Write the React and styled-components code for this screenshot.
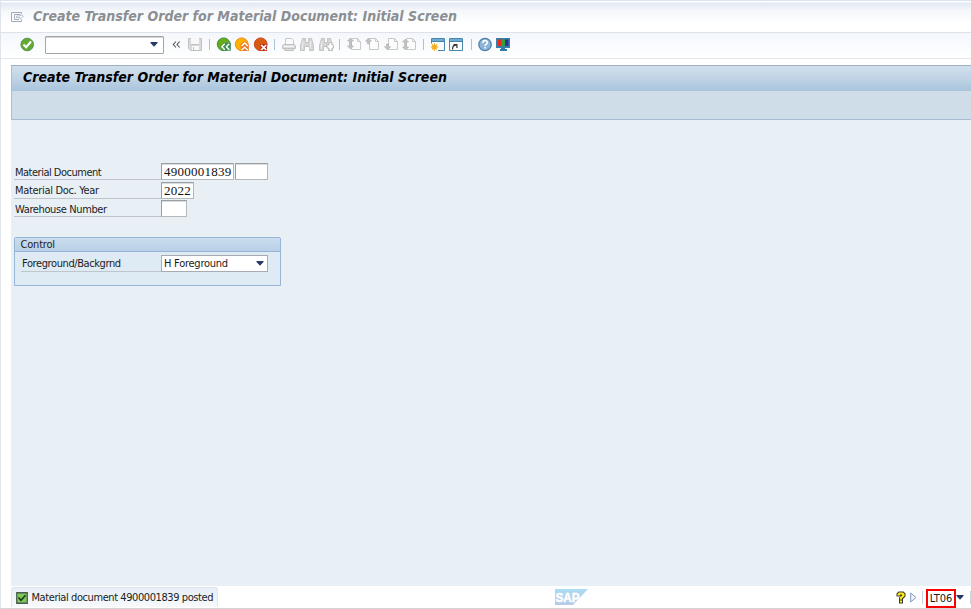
import React from 'react';
import styled, { createGlobalStyle } from 'styled-components';

const Global = createGlobalStyle`
  * { box-sizing: border-box; }
  body { margin: 0; overflow: hidden; background: #fff; }
  svg { flex: none; }
`;

const ui = `"DejaVu Sans Condensed", "DejaVu Sans", Tahoma, sans-serif`;

const Window = styled.div`
  width: 971px;
  height: 609px;
  display: flex;
  flex-direction: column;
  background: #fff;
  border-left: 1px solid #dfe3ea;
  border-bottom: 1px solid #d6d6d6;
  font-family: ${ui};
  font-stretch: condensed;
  font-size: 11px;
  color: #1c1c1c;
`;

const TitleBar = styled.header`
  height: 33px;
  flex: none;
  display: flex;
  align-items: center;
  padding: 0 0 0 10px;
  gap: 9px;
  border-top: 1px solid #dce3ec;
  border-bottom: 1px solid #dfe3e9;
  background: linear-gradient(#fff 0, #fff 1px, #e2e9f3 2px, #f5f8fb 10px, #fff 22px);
`;

const Title = styled.h1`
  margin: 0;
  padding-bottom: 2px;
  font-family: ${ui};
  font-size: 14px;
  line-height: 16px;
  font-weight: bold;
  font-style: italic;
  font-stretch: condensed;
  letter-spacing: 0.01px;
  white-space: nowrap;
  color: ${(p) => (p.$muted ? '#8b8e93' : '#000')};
`;

const Toolbar = styled.nav`
  height: 26px;
  flex: none;
  display: flex;
  align-items: center;
  padding: 0 0 3px 18px;
  border-bottom: 1px solid #e3e8ef;
  background: linear-gradient(#f4f7fc, #fff);
`;

const Slot = styled.span`
  width: 16px;
  height: 16px;
  flex: none;
  margin-left: ${(p) => p.$gap || 0}px;
  svg { display: block; }
`;

const Separator = styled.span`
  width: 1px;
  height: 11px;
  flex: none;
  margin-left: ${(p) => p.$gap}px;
  background: #a9c3dc;
`;

const CommandBox = styled.div`
  width: 119px;
  height: 18px;
  margin: 1px 0 0 10px;
  padding-right: 5px;
  display: flex;
  align-items: center;
  justify-content: flex-end;
  background: #fff;
  border: 1px solid #a5a5a5;
  border-radius: 1px;
  box-shadow: inset 0 1px #d5d5d5;
`;

const Main = styled.main`
  flex: 1;
  margin: 6px 0 0 10px;
  background: #e8f0f6;
`;

const Heading = styled.div`
  height: 26px;
  display: flex;
  align-items: center;
  padding: 0 0 2px 11px;
  border-top: 1px solid #9fb0c4;
  border-left: 1px solid #aebfd0;
  background: linear-gradient(#d0dfec, #c2d5e6 45%, #a9c4dc);
`;

const ActionBar = styled.div`
  height: 29px;
  border-left: 1px solid #aebfd0;
  border-bottom: 1px solid #a8bccf;
  background: #cfdde8;
`;

const Form = styled.div`
  padding: 43px 0 0 3px;
  display: flex;
  flex-direction: column;
  gap: 1px;
`;

const Row = styled.div`
  height: 17.5px;
  display: flex;
  gap: 1px;
`;

const Label = styled.label`
  width: ${(p) => p.$width || 147}px;
  height: 17px;
  padding: 1.5px 0 0 1px;
  border-bottom: 1px solid #bfc5ca;
  line-height: 15px;
  letter-spacing: ${(p) => p.$spacing}px;
  white-space: nowrap;
`;

const Field = styled.div`
  width: ${(p) => p.$width}px;
  height: 17px;
  margin-left: ${(p) => (p.$first ? -1 : 0)}px;
  padding-left: 2px;
  background: #fff;
  border: 1px solid #b3b8bd;
  border-top-color: #999fa5;
  border-left-color: #999fa5;
  box-shadow: inset 0 1px #dadcde;
  font: 13px/15px "Liberation Serif", serif;
  letter-spacing: 0.25px;
  color: #111;
  white-space: nowrap;
`;

const Group = styled.section`
  width: 267px;
  height: 49px;
  margin: 19px 0 0 3px;
  border: 1px solid #96b5d8;
  border-radius: 2px 2px 0 0;
  background: #deeaf4;
`;

const GroupTitle = styled.h2`
  height: 14px;
  margin: 0;
  padding-left: 5.5px;
  border-bottom: 1px solid #96b5d8;
  background: linear-gradient(#cbddee, #b9d0e7);
  font-size: 11px;
  font-weight: normal;
  line-height: 13px;
  letter-spacing: -0.2px;
`;

const GroupBody = styled.div`
  display: flex;
  padding: 3px 0 0 6px;
`;

const Select = styled.div`
  width: 107px;
  height: 17px;
  padding: 0 3px 0 2px;
  display: flex;
  align-items: center;
  justify-content: space-between;
  background: #fff;
  border: 1px solid #a5abb1;
  letter-spacing: -0.25px;
`;

const StatusBar = styled.footer`
  height: 22px;
  flex: none;
  display: flex;
  align-items: flex-start;
  padding: 1px 0 0 10px;
  background: #fff;
`;

const Message = styled.div`
  width: 207px;
  height: 20px;
  flex: none;
  display: flex;
  align-items: center;
  gap: 4px;
  padding-left: 3.5px;
  border: 1px solid #dce4ed;
  border-bottom: 0;
  border-radius: 3px 3px 0 0;
  background: linear-gradient(#e7eef6, #f8fafc);
  white-space: nowrap;
  letter-spacing: -0.42px;
`;

const Logo = styled.span`
  width: 33px;
  height: 16px;
  flex: none;
  margin: 2px 0 0 337px;
  svg { display: block; }
`;

const StatusTools = styled.div`
  flex: 1;
  display: flex;
  align-items: center;
  justify-content: flex-end;
  height: 20px;
`;

const Divider = styled.span`
  width: 1px;
  height: 13px;
  margin-left: ${(p) => p.$gap}px;
  background: #cbd3df;
`;

const Transaction = styled.span`
  width: 30px;
  height: 19px;
  margin: 2px 0 0 3px;
  border: 2px solid #fa0000;
  line-height: 16px;
  text-align: center;
  color: #222;
`;

const Gap = styled.span`
  width: ${(p) => p.$w}px;
  flex: none;
`;

const Svg = ({ w = 16, h = 16, children }) => (
  <svg width={w} height={h} viewBox={`0 0 ${w} ${h}`} fill="none">{children}</svg>
);

const Arrow = () => (
  <Svg w={8} h={5}><path d="M.5 0h7v1L4 4.7.5 1z" fill="#263b68" /></Svg>
);

const ExitIcon = () => (
  <Svg w={13} h={11}>
    <path d="M10.5 3V1.5H.5v9h10V8.5" stroke="#a1a9ba" />
    <path d="M9 3.5H3.5v5H8" stroke="#a1a9ba" />
    <path d="M5.5 5h3.7V3.6L12.5 5.3 9.2 8V6.5H5.5z" fill="#fff" stroke="#a1a9ba" strokeWidth=".7" />
  </Svg>
);

const OkIcon = () => (
  <Svg>
    <circle cx="8.2" cy="8.5" r="6.3" fill="#62ab32" stroke="#5b9651" />
    <path d="M4.5 8.6l2.6 2.7 4.9-5.8" stroke="#fff" strokeWidth="2.1" />
  </Svg>
);

const CollapseIcon = () => (
  <Svg><path d="M8 5.5L5.3 8.5 8 11.5M11.7 5.5L9 8.5l2.7 3" stroke="#555" strokeWidth="1.1" /></Svg>
);

const SaveIcon = () => (
  <Svg>
    <path d="M1.5 2.5h13v12h-11l-2-2z" fill="#d9d9d9" stroke="#c2c2c2" />
    <path d="M4 2h8v6H4zM5 10h7v4H5z" fill="#f8f8f8" />
    <path d="M4 8.5h8M6.5 11v3" stroke="#c2c2c2" />
  </Svg>
);

const BackIcon = () => (
  <Svg>
    <circle cx="7.7" cy="8.3" r="6.4" fill="#68ad18" stroke="#3e8c4b" />
    <path d="M4 10.7l4-4h6.8v8H8z" fill="#3d8c56" />
    <path d="M8.8 7.7l-3 3 3 3M13.3 7.7l-3 3 3 3" stroke="#fff" strokeWidth="1.4" />
  </Svg>
);

const UpIcon = () => (
  <Svg>
    <circle cx="7.7" cy="8.3" r="6.4" fill="#ffb200" stroke="#ed8d19" />
    <path d="M6.5 8.5l4-3.5 4.3 3.5V15H7z" fill="#ed7528" />
    <path d="M7.5 10l3.2-3 3.2 3M7.5 14.2l3.2-3 3.2 3" stroke="#fff" strokeWidth="1.5" />
  </Svg>
);

const CancelIcon = () => (
  <Svg>
    <circle cx="7.7" cy="8.3" r="6.4" fill="#d95a10" stroke="#c64c23" />
    <path d="M7.5 8H14v7H7.5z" fill="#b62f20" />
    <path d="M8.2 9l5 5M13.2 9l-5 5" stroke="#fff" strokeWidth="1.7" />
  </Svg>
);

const PrintIcon = () => (
  <Svg>
    <path d="M4.5 8V2.5h6l2 2V8" fill="#fafafa" stroke="#c9c9c9" />
    <path d="M2.5 8.5h11l1 1v3h-13v-3zM3.5 12.5h9v2h-9z" fill="#ddd" stroke="#c2c2c2" />
    <path d="M3 10.5h9" stroke="#f8f8f8" />
  </Svg>
);

const FindIcon = ({ plus }) => (
  <Svg>
    <path d="M3.5 2.5h3v4h3v-4h3l2 7v5h-4v-4h-5v4h-4v-5z" fill="#d5d5d5" stroke="#c4c4c4" />
    <path d="M4 5l-1 8M12 5l-1 8" stroke="#f1f1f1" />
    {plus && <path d="M9 9h2V6.5h3V9h1.5v3H14v2.5h-3V12H9z" fill="#fff" stroke="#bbb" />}
  </Svg>
);

const pageArrows = {
  first: 'M4.5 2L1.5 5h2v5h-2l3 3 3-3h-2V5h2z',
  previous: 'M4.5 2L1.5 5.3h2V8h2V5.3h2z',
  next: 'M4.5 14l-3-3.3h2V8h2v2.7h2z',
  last: 'M4.5 3L1.5 6h2v5h-2l3 3 3-3h-2V6h2z',
};

const PageIcon = ({ kind }) => (
  <Svg>
    <path d="M5.5 2.5h6l3 3v8h-9z" fill="#fcfcfc" stroke="#c9c9c9" />
    <path d="M11.5 2.5v3h3" stroke="#c9c9c9" />
    <path d={pageArrows[kind]} fill="#c2c2c2" stroke="#b8b8b8" strokeWidth=".8" />
  </Svg>
);

const SessionIcon = ({ shortcut }) => (
  <Svg>
    <path d="M1.5 2.5h13v12h-13z" fill="#f9fbfd" stroke="#4787ae" />
    <path d="M2 3h12v2H2z" fill="#72a9d0" />
    <path d="M2 5.5h12" stroke="#4787ae" />
    {shortcut ? (
      <path d="M4.5 13.5c0-3 1-4.3 3.5-4.3M5.5 8.6h3.4V12" stroke="#333" strokeWidth="1.2" />
    ) : (
      <>
        <path d="M0 7.5h8V15H0z" fill="#fff" />
        <path d="M4.5 7.2v7.6M.7 11h7.6M1.9 8.4l5.2 5.2M7.1 8.4l-5.2 5.2" stroke="#f2a51d" strokeWidth="1.1" />
        <circle cx="4.5" cy="11" r="2.3" fill="#f6ad19" />
      </>
    )}
  </Svg>
);

const HelpIcon = () => (
  <Svg>
    <circle cx="8" cy="8.5" r="6.2" fill="#8db5d6" stroke="#4a82ad" strokeWidth="1.3" />
    <path d="M5.8 7c0-3.3 4.6-3 4.6-.5 0 1.7-2.3 1.6-2.3 3.4M8.1 11v1.6" stroke="#fff" strokeWidth="1.5" />
  </Svg>
);

const MonitorIcon = () => (
  <Svg>
    <path d="M1 2h14v10H1z" fill="#367fa8" />
    <path d="M3 3.5h3.5V10H3z" fill="#ed291c" />
    <path d="M6.5 3.5H10V10H6.5z" fill="#32a334" />
    <path d="M10 3.5h3.5V10H10z" fill="#342f9b" />
    <path d="M6 12h4v1h2v2H5v-2h1z" fill="#2d7ba9" />
  </Svg>
);

const CheckIcon = () => (
  <Svg w={12} h={12}>
    <path d="M.75.75h10.5v10.5H.75z" fill="#7cc957" stroke="#4c5b50" strokeWidth="1.3" />
    <path d="M2.5 5.5L5 8.3l4.5-5" stroke="#18351c" strokeWidth="1.5" />
  </Svg>
);

const SapLogo = () => (
  <Svg w={33} h={16}>
    <defs>
      <linearGradient id="logo" x1="0" y1="0" x2="0" y2="1">
        <stop stopColor="#a9dcf3" />
        <stop offset="1" stopColor="#b7cae9" />
      </linearGradient>
    </defs>
    <path d="M0 0h33L18 16H0z" fill="url(#logo)" />
    <text x="0.5" y="12.5" textLength="24" lengthAdjust="spacingAndGlyphs" fill="#fff" stroke="#fff" strokeWidth=".5" fontFamily="Liberation Sans, sans-serif" fontSize="13" fontWeight="bold">SAP</text>
  </Svg>
);

const QuestionIcon = () => (
  <Svg w={10} h={13}>
    <path d="M.5 5.5v-3l2-2h5l2 2v3L7 8v4.5H3V6.5L5 5.5z" fill="#3a3a2a" />
    <path d="M1.5 4.5V3L3 1.5h4L8.5 3v2L6 7.2v1.3H4V6.3l2-1.6V3.5H4v1zM4 9.5h2v2H4z" fill="#ffe91c" />
  </Svg>
);

const PlayIcon = () => (
  <Svg w={7} h={11}><path d="M.7 1l5.3 4.5L.7 10z" fill="#edf4fc" stroke="#7e9cc0" /></Svg>
);

export default function App() {
  return (
    <>
      <Global />
      <Window>
        <TitleBar>
          <ExitIcon />
          <Title $muted>Create Transfer Order for Material Document: Initial Screen</Title>
        </TitleBar>
        <Toolbar>
          <Slot><OkIcon /></Slot>
          <CommandBox><Arrow /></CommandBox>
          <Slot $gap={4}><CollapseIcon /></Slot>
          <Slot $gap={3}><SaveIcon /></Slot>
          <Separator $gap={6} />
          <Slot $gap={6}><BackIcon /></Slot>
          <Slot $gap={2}><UpIcon /></Slot>
          <Slot $gap={3}><CancelIcon /></Slot>
          <Separator $gap={5} />
          <Slot $gap={6}><PrintIcon /></Slot>
          <Slot $gap={2}><FindIcon /></Slot>
          <Slot $gap={3}><FindIcon plus /></Slot>
          <Separator $gap={5} />
          <Slot $gap={6}><PageIcon kind="first" /></Slot>
          <Slot $gap={2}><PageIcon kind="previous" /></Slot>
          <Slot $gap={3}><PageIcon kind="next" /></Slot>
          <Slot $gap={2}><PageIcon kind="last" /></Slot>
          <Separator $gap={6} />
          <Slot $gap={6}><SessionIcon /></Slot>
          <Slot $gap={2}><SessionIcon shortcut /></Slot>
          <Separator $gap={7} />
          <Slot $gap={5}><HelpIcon /></Slot>
          <Slot $gap={2}><MonitorIcon /></Slot>
        </Toolbar>
        <Main>
          <Heading><Title>Create Transfer Order for Material Document: Initial Screen</Title></Heading>
          <ActionBar />
          <Form>
            <Row><Label $spacing={-0.5}>Material Document</Label><Field $first $width={73}>4900001839</Field><Field $width={33} /></Row>
            <Row><Label $spacing={-0.32}>Material Doc. Year</Label><Field $first $width={33}>2022</Field></Row>
            <Row><Label $spacing={-0.38}>Warehouse Number</Label><Field $first $width={26} /></Row>
          </Form>
          <Group>
            <GroupTitle>Control</GroupTitle>
            <GroupBody>
              <Label $width={140} $spacing={-0.4}>Foreground/Backgrnd</Label>
              <Select>H Foreground<Arrow /></Select>
            </GroupBody>
          </Group>
        </Main>
        <StatusBar>
          <Message><CheckIcon />Material document 4900001839 posted</Message>
          <Logo><SapLogo /></Logo>
          <StatusTools>
            <QuestionIcon /><Gap $w={4} /><PlayIcon />
            <Divider $gap={5} />
            <Transaction>LT06</Transaction>
            <Arrow />
            <Divider $gap={6} />
          </StatusTools>
        </StatusBar>
      </Window>
    </>
  );
}
